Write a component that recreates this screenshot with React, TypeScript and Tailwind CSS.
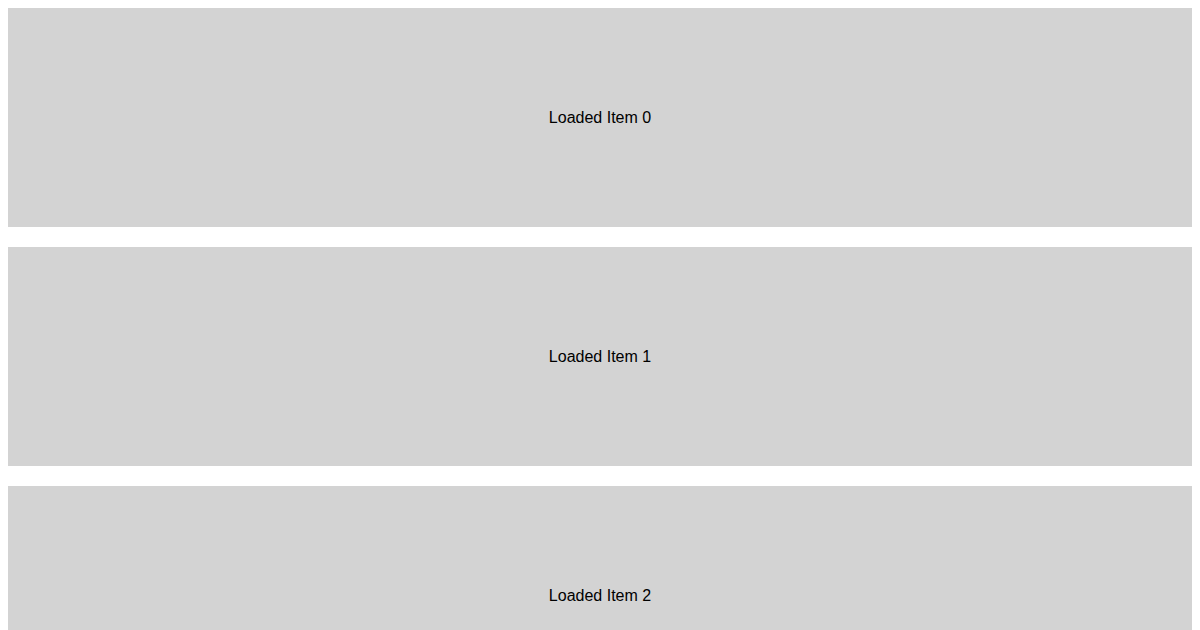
export default function App() {
  const items = [0, 1, 2];
  return (
    <div className="p-2 flex flex-col gap-5" style={{ fontFamily: '"Liberation Sans", Arial, sans-serif' }}>
      {items.map((i) => (
        <div key={i} className="h-[219px] bg-[#d3d3d3] flex items-center justify-center text-base text-black">
          Loaded Item {i}
        </div>
      ))}
    </div>
  );
}
